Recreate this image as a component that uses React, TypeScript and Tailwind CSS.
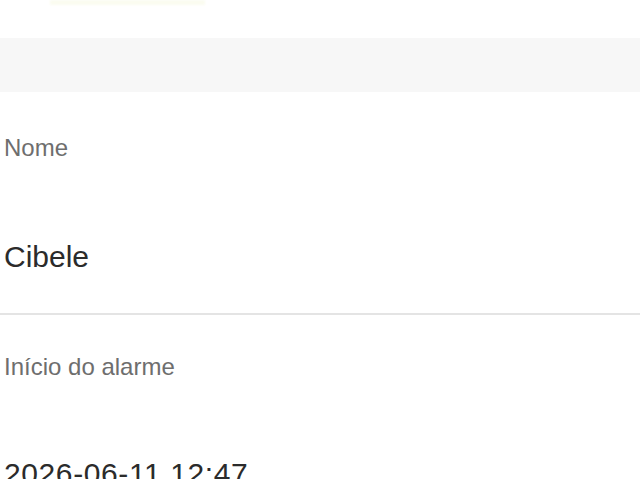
import React from 'react';

// Alarm detail form: a header strip, a grey section band, then label/value rows.

const font = { fontFamily: '"Liberation Sans", Arial, sans-serif' };

function Field({ label, value, divider }: { label: string; value: string; divider?: boolean }) {
  return (
    <div className="flex flex-col">
      <div className="pl-[4px] text-[24px] leading-[28px] text-[#6e6e6e]">{label}</div>
      <div className="mt-[77px] pl-[4px] text-[30px] leading-[36px] text-[#2b2b2b]">{value}</div>
      {divider && <div className="mt-[38px] h-[2px] bg-[#e4e4e4]" />}
    </div>
  );
}

export default function App() {
  return (
    <div className="w-[640px] h-[479px] overflow-hidden bg-white" style={font}>
      {/* header strip, mostly scrolled away */}
      <div className="h-[38px] bg-white">
        <div className="ml-[50px] h-[5px] w-[155px] bg-[#fbfcf0] blur-[1px]" />
      </div>
      <div className="h-[54px] bg-[#f7f7f7]" />

      <div className="flex flex-col pt-[42px]">
        <Field label="Nome" value="Cibele" divider />
        <div className="mt-[38px]">
          <div className="pl-[4px] text-[24px] leading-[28px] text-[#6e6e6e]">Início do alarme</div>
          <div className="mt-[75px] pl-[4px] text-[30px] leading-[36px] tracking-[0.6px] text-[#2b2b2b]">
            2026-06-11 12:47
          </div>
        </div>
      </div>
    </div>
  );
}
